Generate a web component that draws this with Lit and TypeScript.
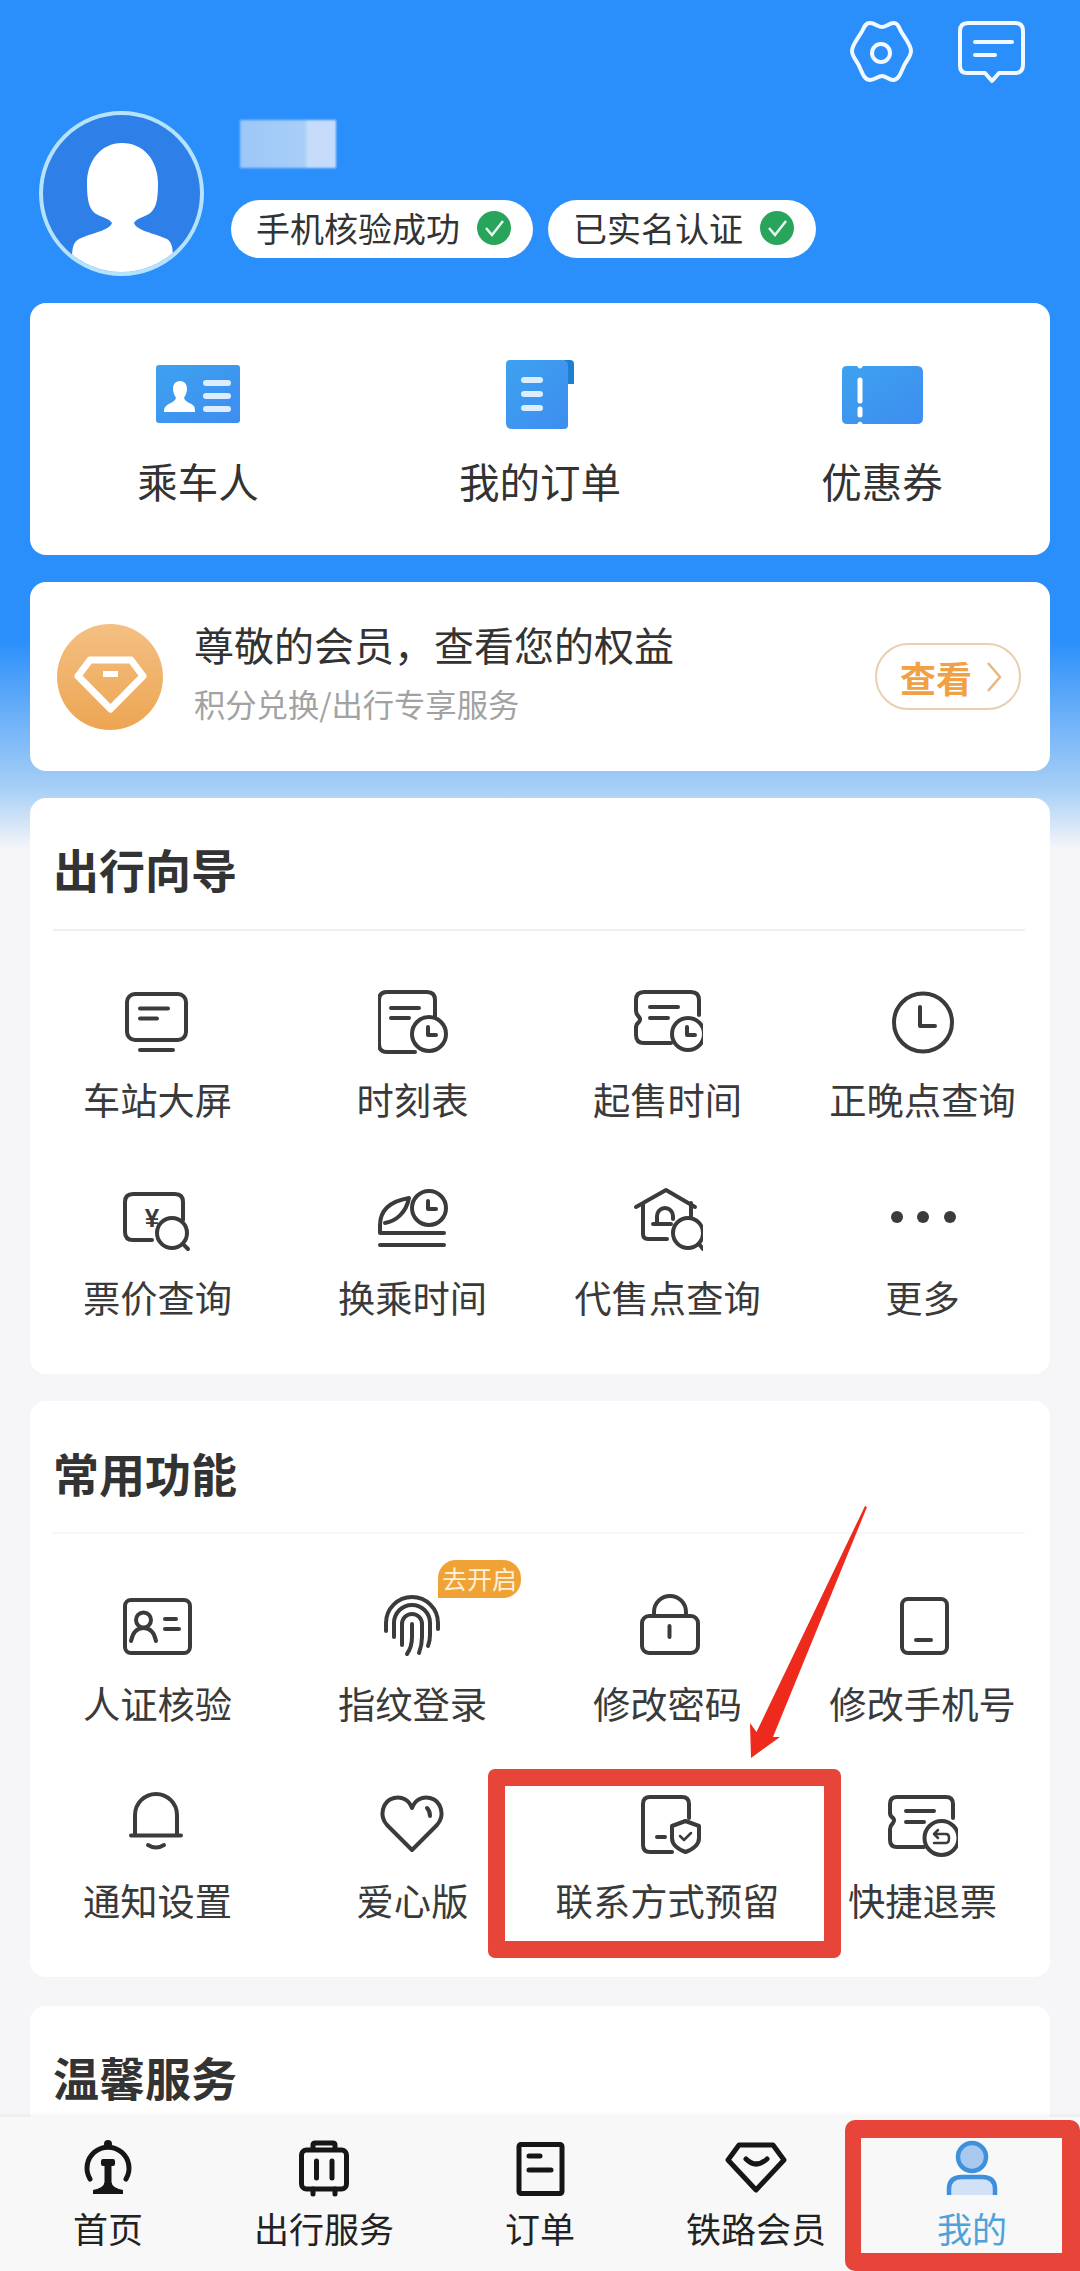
import { LitElement, html, svg, css } from "lit";
import { customElement } from "lit/decorators.js";

const clock = (cx: number, cy: number, r: number, sz = 7) => svg`
  <circle cx=${cx} cy=${cy} r=${r} />
  <path d="M${cx - 1} ${cy - sz} V${cy + 1} H${cx + sz}" />`;
const lens = (cx: number, cy: number, r: number, ex: number, ey: number) => svg`
  <circle cx=${cx} cy=${cy} r=${r} />
  <path d="M${cx + r * 0.72} ${cy + r * 0.72} L${ex} ${ey}" />`;

const ICONS: Record<string, any> = {
  screen: svg`<rect x="4" y="7" width="59" height="46" rx="8"/><path d="M17 21.5H45M17 31.5H34M17 63H50" />`,
  timetable: svg`<path d="M57 30V13Q57 5 49 5H9Q1 5 1 13V57Q1 65 9 65H37M13 21H41M13 31H31"/>${clock(51, 47, 17)}`,
  sale: svg`<path d="M66 28V13Q66 5 58 5H11Q3 5 3 13V24Q3 27 6 30Q8 32 6 35Q3 37 3 41V48Q3 56 11 56H38M17 20H45M17 31H35"/>${clock(55, 47, 16)}`,
  clock: svg`<circle cx="35" cy="35.5" r="29"/><path d="M32 20V39H47"/>`,
  price: svg`<path d="M60 35V17Q60 9 52 9H10Q2 9 2 17V47Q2 55 10 55H29"/>${lens(49, 48, 15, 65, 64)}<text class="yen" x="29" y="42">¥</text>`,
  transfer: svg`${clock(51, 23, 17)}<path d="M2 48V40C2 24 14 16 31 13C28 28 18 36 7 38M2 48H66M2 60H66"/>`,
  agency: svg`<path d="M3 22L33 5L62 22M10 18V49Q10 54 15 54H34M58 18V33"/><path d="M24 39V31A8 8 0 0 1 40 31V34M20 39H38"/>${lens(55, 48, 15, 70, 64)}`,
  more: svg`<circle class="f" cx="9" cy="32" r="6"/><circle class="f" cx="35" cy="32" r="6"/><circle class="f" cx="62" cy="32" r="6"/>`,
  idcard: svg`<rect x="2" y="9" width="65" height="53" rx="6"/><circle cx="20.5" cy="29" r="7.5"/><path d="M8 50C10 40 15 37 20.5 37C26 37 31 40 33 50M42 28H53M42 38H56"/>`,
  finger: svg`<path d="M8 40V32A26 26 0 0 1 60 32V38"/><path d="M16 46V32A18 18 0 0 1 52 32V44Q52 50 50 55"/><path d="M24 54V33A10 10 0 0 1 44 33V46Q44 54 41 62"/><path d="M34 33V46Q34 56 29 63"/>`,
  lock: svg`<rect x="9" y="25" width="56" height="37" rx="7"/><path d="M21 25V21A15.5 15.5 0 0 1 53 21V25M36.5 35V46"/>`,
  phone: svg`<rect x="14" y="8" width="45" height="54" rx="6"/><path d="M28 49H43"/>`,
  bell: svg`<path d="M12 47V27A21 21 0 0 1 54 27V47M8 47.5H58M25 57Q33 62 41 57"/>`,
  heart: svg`<path d="M34 62L9 37C1 28 4 13 16 10C24 8 31 12 34 20C37 12 44 8 52 10C64 13 67 28 59 37ZM49 20Q52 23 52 28"/>`,
  contact: svg`<path d="M56 30V16Q56 9 49 9H17Q10 9 10 16V57Q10 64 17 64H39M24 49H32"/><path d="M52.5 33L66 38V50Q66 59 52.5 64Q39 59 39 50V38Z"/><path class="thin" d="M47 48L51 52L58 45"/>`,
  refund: svg`<path d="M65 30V16Q65 9 58 9H9Q2 9 2 16V25Q2 28 5 30Q7 32 5 35Q2 38 2 41V52Q2 59 9 59H36M18 23H46M18 34H36"/><circle cx="53.5" cy="50" r="17"/><path class="thin" d="M46 46H58Q61 46 61 50Q61 55 58 55H46M50 42L46 46L50 50"/>`,
};

const Navi = [
  ["screen", "车站大屏"], ["timetable", "时刻表"], ["sale", "起售时间"], ["clock", "正晚点查询"],
  ["price", "票价查询"], ["transfer", "换乘时间"], ["agency", "代售点查询"], ["more", "更多"],
];
const Common = [
  ["idcard", "人证核验"], ["finger", "指纹登录"], ["lock", "修改密码"], ["phone", "修改手机号"],
  ["bell", "通知设置"], ["heart", "爱心版"], ["contact", "联系方式预留"], ["refund", "快捷退票"],
];

const NAV = [
  { t: "首页", i: svg`<path class="n" d="M17 44A21 21 0 1 1 53 44"/><circle class="nf" cx="35" cy="9" r="4"/><path class="nf" d="M30 24H40Q42 24 42 26V29Q42 31 40 31H38.500L38.500 47Q39 53 50 55V59H20V55Q31 53 31.500 47L31.500 31H30Q28 31 28 29V26Q28 24 30 24Z"/>` },
  { t: "出行服务", i: svg`<rect class="n" x="12.5" y="15" width="45" height="39" rx="5"/><path class="n" d="M24 14V10Q24 8 26 8H44Q46 8 46 10V14M27.5 26V43M43 26V43M24 54V59M46 54V59"/>` },
  { t: "订单", i: svg`<rect class="n" x="14" y="9.5" width="43" height="49" rx="2"/><path class="n" d="M24 21H35M24 35H46"/>` },
  { t: "铁路会员", i: svg`<path class="n" d="M18 10H52L63 25L35 55L7 25Z"/><path class="n" d="M25 24Q35 34 46 24"/>` },
];

@customElement("app-root")
export class AppRoot extends LitElement {
  static styles = css`
    :host {
      display: flex;
      flex-direction: column;
      position: relative;
      width: 1080px;
      height: 2271px;
      overflow: hidden;
      font-family: "Noto Sans CJK SC", "Noto Sans", sans-serif;
      color: #333;
      background: linear-gradient(#2b8ffb 0, #2b8ffb 640px, #a9d0f6 790px, #f6f6f8 850px);
    }
    .main { flex: 1; min-height: 0; overflow: hidden; }
    .top { display: flex; justify-content: flex-end; gap: 43px; padding: 20px 53px 0 0; height: 64px; }
    .top svg { fill: none; stroke: #f2f8ff; stroke-width: 4; stroke-linecap: round; stroke-linejoin: round; }
    .profile { display: flex; gap: 27px; padding: 27px 0 27px 39px; }
    .avatar {
      width: 165px; height: 165px; box-sizing: border-box; border-radius: 50%;
      border: 4px solid #b5e3fb; background: #2e80e8; overflow: hidden; flex: none;
    }
    .avatar svg { display: block; margin: -4px; fill: #fff; }
    .info { padding-top: 9px; }
    .name {
      width: 96px; height: 48px; margin-left: 9px; filter: blur(1px);
      background: linear-gradient(90deg, #9cc7f8 0, #a9cff8 68%, #c6dcfa 70%, #c6dcfa 100%);
    }
    .badges { display: flex; gap: 15px; margin-top: 32px; }
    .badge {
      display: flex; align-items: center; gap: 17px; height: 58px; box-sizing: border-box;
      padding: 0 22px 2px 25px; background: #fff; border-radius: 29px;
      font-size: 34px; line-height: 56px; white-space: nowrap; color: #333;
    }
    .check { display: block; flex: none; }
    .cards { display: flex; flex-direction: column; gap: 27px; padding: 0 30px; }
    .card { background: #fff; border-radius: 16px; }
    .quick { display: grid; grid-template-columns: repeat(3, 342px); justify-content: center; height: 252px; box-sizing: border-box; padding-top: 52px; }
    .qi { display: flex; flex-direction: column; align-items: center; gap: 21px; }
    .qi svg { display: block; }
    .qi span { font-size: 40.5px; line-height: 50px; white-space: nowrap; }
    .vip { display: flex; align-items: center; height: 189px; padding: 0 29px 0 26px; box-sizing: border-box; }
    .vip-ic { display: block; flex: none; margin-right: 30px; }
    .vip-text { padding-bottom: 7px; }
    .vip-t { font-size: 40px; line-height: 46px; white-space: nowrap; }
    .vip-s { font-size: 31.3px; line-height: 44px; color: #a2a2a2; margin-top: 15px; white-space: nowrap; }
    .see {
      margin-left: auto; display: flex; align-items: center; gap: 14px; box-sizing: border-box;
      width: 146px; height: 67px; padding-left: 23px; border: 2px solid #e8d0ae; border-radius: 34px;
      color: #f0a045; font-size: 36px; font-weight: 700; line-height: 1; flex: none;
    }
    .see svg { fill: none; stroke: #e9b680; stroke-width: 2.5; }
    .sec { box-sizing: border-box; height: 576px; }
    .sec.second { margin-bottom: 2px; }
    .head { margin: 0 25px 0 23px; height: 133px; box-sizing: border-box; padding-top: 47px; border-bottom: 2px solid #efefef; }
    .second .head { height: 133px; padding-top: 48px; border-bottom-color: #f6f6f6; }
    h2 { margin: 0; font-size: 46px; line-height: 46px; font-weight: 700; color: #333; }
    .grid { display: grid; grid-template-columns: repeat(4, 255px); row-gap: 64px; padding-top: 56px; }
    .second .grid { row-gap: 63px; padding-top: 57px; }
    .cell { position: relative; display: flex; flex-direction: column; align-items: center; gap: 20px; }
    .cell svg.ic { display: block; fill: none; stroke: #3b3b3b; stroke-width: 4; stroke-linecap: round; stroke-linejoin: round; }
    .cell svg .f { fill: #3b3b3b; stroke: none; }
    .cell svg .thin { stroke-width: 2.5; }
    .cell svg .yen { fill: #3b3b3b; stroke: none; font-size: 26px; font-weight: 700; text-anchor: middle; font-family: "Liberation Sans", sans-serif; }
    .cell span { font-size: 37.3px; line-height: 44px; white-space: nowrap; color: #3a3a3a; }
    .cell .tag {
      position: absolute; left: 153px; top: -31px; width: 83px; height: 38px; text-align: center;
      background: #f0a235; color: #fdf0dc; border-radius: 18px 18px 18px 0; font-size: 25px; line-height: 36px;
    }
    .sec.last { height: 150px; }
    .last .head { border: 0; }
    nav {
      flex: none; height: 154px; box-sizing: border-box; padding-top: 18px;
      display: grid; grid-template-columns: repeat(5, 216px); background: #f8f8f8; position: relative;
      box-shadow: 0 -2px 4px rgba(0,0,0,.05);
    }
    .ni { display: flex; flex-direction: column; align-items: center; gap: 3px; font-size: 35px; line-height: 40px; color: #222; white-space: nowrap; }
    .ni svg { display: block; }
    .n { fill: none; stroke: #161616; stroke-width: 5; stroke-linecap: round; stroke-linejoin: round; }
    .nf { fill: #161616; }
    .me { color: #4fa2d8; }
    .frame { position: absolute; box-sizing: border-box; border: 17px solid #e8453a; border-radius: 7px; }
    .f1 { left: 488px; top: 1769px; width: 353px; height: 189px; }
    .f2 { left: 845px; top: 2120px; width: 235px; height: 151px; border-width: 18px 18px 18px 16px; border-radius: 10px 10px 0 10px; }
    .arrow { position: absolute; left: 740px; top: 1500px; fill: #ee2a1c; }
  `;

  private cell(i: string, t: string) {
    return html`<div class="cell">
      <svg class="ic" width="70" height="70" viewBox="0 0 70 70">${ICONS[i]}</svg>
      <span>${t}</span>
      ${i === "finger" ? html`<span class="tag">去开启</span>` : ""}
    </div>`;
  }

  private check() {
    return html`<svg class="check" width="34" height="34" viewBox="0 0 34 34">
      <circle cx="17" cy="17" r="17" fill="#28a55b"/>
      <path d="M9 17L15 24L26 10" fill="none" stroke="#e8f7ee" stroke-width="2.5"/>
    </svg>`;
  }

  render() {
    return html`
      <div class="main">
        <div class="top">
          <svg width="64" height="64" viewBox="0 0 64 64">
            <path d="M32 7C36 7 39 3 44 3C49 3 49 9 52 13C55 18 61 25 61 31C61 37 55 42 53 48C50 55 48 60 43 60C39 60 36 56 32 56C28 56 25 60 20 60C15 60 13 55 10 48C8 42 2 37 2 31C2 25 8 18 11 13C14 9 14 3 20 3C25 3 28 7 32 7Z"/>
            <circle cx="31" cy="33" r="9"/>
          </svg>
          <svg width="70" height="64" viewBox="0 0 70 64">
            <path d="M28 53H10Q3 53 3 46V11Q3 3 11 3H58Q66 3 66 11V45Q66 53 58 53H42L35 61Z"/>
            <path d="M18 22H55M18 35H38"/>
          </svg>
        </div>
        <div class="profile">
          <div class="avatar">
            <svg width="165" height="165" viewBox="0 0 165 165">
              <path d="M83 32C105 32 119 50 119 72C119 90 117 100 108 104C102 107 97 108 95 112C98 120 115 122 128 128C134 132 134 140 134 152L134 170L33 170L33 152C33 140 33 132 40 128C52 122 70 120 73 112C71 108 65 107 59 104C50 100 48 90 48 72C48 50 62 32 83 32Z"/>
            </svg>
          </div>
          <div class="info">
            <div class="name"></div>
            <div class="badges">
              <div class="badge">手机核验成功${this.check()}</div>
              <div class="badge">已实名认证${this.check()}</div>
            </div>
          </div>
        </div>
        <div class="cards">
          <div class="card quick">
            <div class="qi">
              <svg width="100" height="80" viewBox="0 0 100 80">
                <defs><linearGradient id="g" x1="0" y1="0" x2="1" y2="1"><stop offset="0" stop-color="#3da2ef"/><stop offset="1" stop-color="#3d8df0"/></linearGradient></defs>
                <rect x="8" y="10" width="84" height="58" rx="3" fill="url(#g)"/>
                <path fill="#fff" d="M32 26C37 26 39 30 39 34C39 38 37 41 36 43C37 47 43 48 46 51C47 53 47 56 47 57H16C16 55 16 53 18 51C21 48 27 47 28 43C27 41 25 38 25 34C25 30 27 26 32 26Z"/>
                <path fill="none" stroke="#dceefd" stroke-width="6" stroke-linecap="round" d="M58 28H80M58 41H80M58 54H80"/>
              </svg>
              <span>乘车人</span>
            </div>
            <div class="qi">
              <svg width="100" height="80" viewBox="0 0 100 80">
                <path fill="#1d7fd0" d="M72 5H80Q84 5 84 9V29H76V9Q76 6 72 5Z"/>
                <path fill="url(#g)" d="M20 5H72Q78 5 78 11V70Q78 74 74 74H22Q16 74 16 68V9Q16 5 20 5Z"/>
                <path fill="none" stroke="#dceefd" stroke-width="6" stroke-linecap="round" d="M34 25H50M34 39H50M34 53H50"/>
              </svg>
              <span>我的订单</span>
            </div>
            <div class="qi">
              <svg width="100" height="80" viewBox="0 0 100 80">
                <path fill="url(#g)" d="M15 11H25Q28 16 31 11H85Q91 11 91 17V63Q91 69 85 69H31Q28 64 25 69H15Q10 69 10 64V16Q10 11 15 11Z"/>
                <path fill="none" stroke="#fff" stroke-width="5" stroke-linecap="round" d="M28 25V46M28 54V60"/>
              </svg>
              <span>优惠券</span>
            </div>
          </div>
          <div class="card vip">
            <svg class="vip-ic" width="108" height="108" viewBox="0 0 108 108">
              <defs><linearGradient id="o" x1="0" y1="0" x2="0" y2="1"><stop offset="0" stop-color="#f3c083"/><stop offset="1" stop-color="#eda552"/></linearGradient></defs>
              <circle cx="54" cy="54" r="53" fill="url(#o)"/>
              <path d="M34 37H75L87 53L54.5 86L22 53Z" fill="none" stroke="#fff" stroke-width="7" stroke-linejoin="round"/>
              <rect x="47" y="48" width="15" height="6" fill="#fff"/>
            </svg>
            <div class="vip-text">
              <div class="vip-t">尊敬的会员，查看您的权益</div>
              <div class="vip-s">积分兑换/出行专享服务</div>
            </div>
            <div class="see">查看<svg width="16" height="32" viewBox="0 0 16 32"><path d="M2 2L14 16L2 30"/></svg></div>
          </div>
          <div class="card sec">
            <div class="head"><h2>出行向导</h2></div>
            <div class="grid">${Navi.map(([i, t]) => this.cell(i, t))}</div>
          </div>
          <div class="card sec second">
            <div class="head"><h2>常用功能</h2></div>
            <div class="grid">${Common.map(([i, t]) => this.cell(i, t))}</div>
          </div>
          <div class="card sec last">
            <div class="head"><h2>温馨服务</h2></div>
          </div>
        </div>
      </div>
      <nav>
        ${NAV.map((n) => html`<div class="ni">
          <svg width="70" height="70" viewBox="0 0 70 70">${n.i}</svg>${n.t}
        </div>`)}
        <div class="ni me">
          <svg width="70" height="70" viewBox="0 0 70 70">
            <circle cx="35" cy="22" r="14" fill="#a9c8ee" stroke="#3f90dc" stroke-width="4.5"/>
            <path d="M12 60V54Q12 42 25 42H45Q58 42 58 54V60Z" fill="#d3e1f6"/>
            <path d="M12 60V54Q12 42 25 42H45Q58 42 58 54V60" fill="none" stroke="#3f90dc" stroke-width="4.5"/>
          </svg>我的
        </div>
      </nav>
      <div class="frame f1"></div>
      <div class="frame f2"></div>
      <svg class="arrow" width="140" height="270" viewBox="0 0 140 270">
        <polygon points="127,7 33,237 40,237 11,258 10,223 16.5,232 125,6"/>
      </svg>
    `;
  }
}
